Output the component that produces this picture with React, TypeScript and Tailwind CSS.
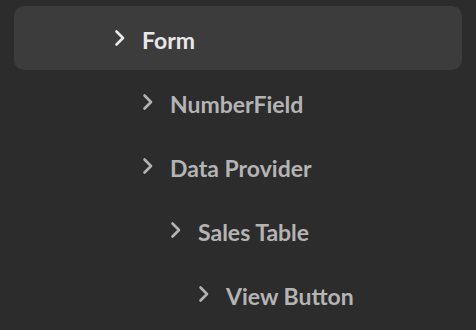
import React from "react";

interface Node {
  label: string;
  depth: number;
  active?: boolean;
}

const nodes: Node[] = [
  { label: "Form", depth: 0, active: true },
  { label: "NumberField", depth: 1 },
  { label: "Data Provider", depth: 1 },
  { label: "Sales Table", depth: 2 },
  { label: "View Button", depth: 3 },
];

const indents = ["pl-[100px]", "pl-[128px]", "pl-[156px]", "pl-[184px]"];

const Chevron = () => (
  <svg width="12" height="18" viewBox="0 0 12 18" fill="none" className="shrink-0">
    <path
      d="M2.5 2.5 L9 9 L2.5 15.5"
      stroke="currentColor"
      strokeWidth="2.6"
      strokeLinecap="round"
      strokeLinejoin="round"
    />
  </svg>
);

const App = () => {
  return (
    <div className="w-[476px] h-[330px] bg-[#2c2c2c] px-[14px] pt-[6px] overflow-hidden font-['Lato',sans-serif]">
      {nodes.map((n) => (
        <div
          key={n.label}
          className={`h-16 flex items-center gap-[16px] rounded-[10px] ${indents[n.depth]} ${
            n.active ? "bg-[#3c3c3c] text-[#e8e8e8]" : "text-[#b4b4b4]"
          }`}>
          <Chevron />
          <span className="text-[23px] font-bold leading-none mt-[4px]">{n.label}</span>
        </div>
      ))}
    </div>
  );
};

export default App;
